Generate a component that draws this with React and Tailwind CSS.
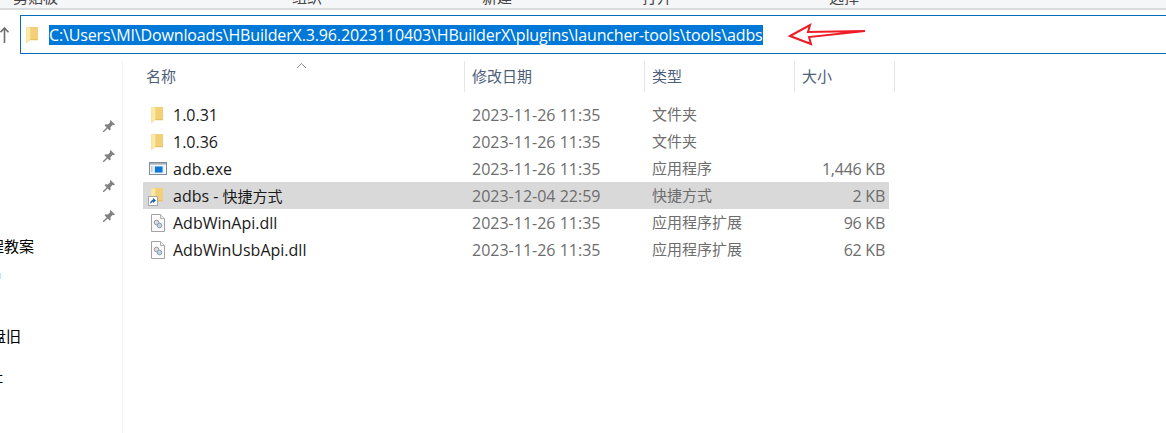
const files = [
  { id: "a", name: "1.0.31", date: "2023-11-26 11:35", type: "文件夹", size: "", icon: "folder" },
  { id: "b", name: "1.0.36", date: "2023-11-26 11:35", type: "文件夹", size: "", icon: "folder" },
  { id: "c", name: "adb.exe", date: "2023-11-26 11:35", type: "应用程序", size: "1,446 KB", icon: "exe" },
  { id: "d", name: "adbs - ", cjk: "快捷方式", date: "2023-12-04 22:59", type: "快捷方式", size: "2 KB", icon: "shortcut", selected: true },
  { id: "e", name: "AdbWinApi.dll", date: "2023-11-26 11:35", type: "应用程序扩展", size: "96 KB", icon: "dll" },
  { id: "f", name: "AdbWinUsbApi.dll", date: "2023-11-26 11:35", type: "应用程序扩展", size: "62 KB", icon: "dll" },
];

function Folder() {
  return (
    <svg width="12" height="17" viewBox="0 0 12 17" className="block">
      <path d="M3.5 1H12v13H3.5z" fill="#f3d077" />
      <path d="M0 1.5 4.5 1v12.5L1 16.5l-1 .3z" fill="#fbe9a6" stroke="#ecd48a" strokeWidth="0.5" />
      <path d="M4.5 13.4H12v.8H4.5z" fill="#e3b84f" />
    </svg>
  );
}

function Exe() {
  return (
    <svg width="18" height="13" viewBox="0 0 18 13" className="block">
      <rect x="0.5" y="0.5" width="17" height="12" fill="#f4f6f8" stroke="#7f8c9a" />
      <rect x="1" y="1" width="16" height="1.6" fill="#a3afbc" />
      <rect x="4.5" y="4" width="10" height="7" fill="#d6e6f5" />
      <rect x="6" y="4.5" width="7.5" height="6" fill="#0a78d7" />
      <path d="M2 5h1.5M2 7h1.5M2 9h1.5" stroke="#8a97a5" />
    </svg>
  );
}

function Dll() {
  return (
    <svg width="14" height="18" viewBox="0 0 14 18" className="block">
      <path d="M.5.5h9l4 4v13H.5z" fill="#fcfcfc" stroke="#a3a3a3" />
      <path d="M9.5.5v4h4" fill="#ececec" stroke="#b0b0b0" />
      <circle cx="5.5" cy="8.5" r="2.3" fill="#dcdcdc" stroke="#989898" />
      <circle cx="8.5" cy="11.5" r="2.3" fill="#c3d4e4" stroke="#7f9cb8" />
    </svg>
  );
}

function Shortcut() {
  return (
    <div className="relative w-[12px] h-[17px]">
      <Folder />
      <svg className="absolute left-[-3px] top-[9px]" width="10" height="10" viewBox="0 0 10 10">
        <rect x="0.5" y="0.5" width="9" height="9" fill="#fff" stroke="#a8a8a8" />
        <path d="M2.5 8V5.6L5 3.6V2l3 2.6L5 7V5.6L3.8 6.6z" fill="#1c5fb0" />
      </svg>
    </div>
  );
}

const icons = {
  folder: { C: Folder, pad: "pl-[8px]" },
  exe: { C: Exe, pad: "pl-[6px]" },
  dll: { C: Dll, pad: "pl-[8px]" },
  shortcut: { C: Shortcut, pad: "pl-[8px]" },
};

function Pin() {
  return (
    <svg width="14" height="14" viewBox="0 0 14 14" className="block">
      <path d="M8.5 1 13 5.5l-1.3.7-.9-.4-2.4 2.4.3 2.3-1 1L5.6 9.4 2 13l-1 0 0-1 3.6-3.6L2.5 6.3l1-1 2.3.3 2.4-2.4-.4-.9z" fill="#828282" />
    </svg>
  );
}

function Header({ width, children }) {
  return (
    <div className={`${width} h-[31px] border-r border-[#e5e5e5] flex items-center text-[#4c607a]`}>
      {children}
    </div>
  );
}

export default function App() {
  return (
    <div
      className="relative w-[1166px] h-[433px] overflow-hidden bg-white text-[16px] flex flex-col"
      style={{ fontFamily: '"Open Sans", "Noto Sans CJK SC", sans-serif' }}
    >
      <div className="h-[10px] shrink-0 bg-[#f5f6f7] border-b-2 border-[#dadbdc] flex text-[#444] text-[15px] overflow-hidden leading-[20px]">
        <div className="w-[185px] h-[8px] border-r border-[#e1e3e6] pl-[13px] -mt-[13px] box-content"><span>剪贴板</span></div>
        <div className="w-[382px] h-[8px] border-r border-[#e1e3e6] -mt-[13px] box-content flex">
          <span className="ml-[93px]">组织</span>
          <span className="ml-[160px]">新建</span>
        </div>
        <div className="w-[152px] h-[8px] border-r border-[#e1e3e6] -mt-[13px] box-content pl-[60px]"><span>打开</span></div>
        <div className="w-[102px] h-[8px] border-r border-[#e1e3e6] -mt-[13px] box-content pl-[34px]"><span>选择</span></div>
      </div>

      <div className="h-[39px] mt-[5px] shrink-0 flex">
        <div className="w-[20px] flex items-center">
          <svg width="10" height="16" viewBox="0 0 10 16" className="mt-[1px]">
            <path d="M4.5 1v15M.5 5.2 4.5 1l4 4.2" fill="none" stroke="#6d6d6d" strokeWidth="1.6" />
          </svg>
        </div>
        <div className="flex-1 border-[1.5px] border-r-0 border-[#0a6cbd] flex items-center pl-[5px]">
          <Folder />
          <span className="ml-[11px] h-[20px] leading-[20px] bg-[#0078d7] text-white whitespace-nowrap tracking-[-0.14px]">
            C:\Users\MI\Downloads\HBuilderX.3.96.2023110403\HBuilderX\plugins\launcher-tools\tools\adbs
          </span>
        </div>
      </div>

      <div className="flex-1 flex mt-[7px]">
        <aside className="w-[123px] shrink-0 border-r border-[#f3f3f3] pt-[50px] text-black text-[15px] overflow-hidden">
          {[0, 1, 2, 3].map((i) => (
            <div key={i} className="h-[30px] flex items-center justify-end pr-[6px]"><Pin /></div>
          ))}
          <div className="h-[30px] flex items-center -ml-[11px] whitespace-nowrap">程教案</div>
          <div className="h-[30px] flex items-center"><div className="w-[1px] h-[6px] bg-[#a8f4f4]" /></div>
          <div className="h-[30px]" />
          <div className="h-[30px] flex items-center -ml-[9px] whitespace-nowrap">盘旧</div>
          <div className="h-[10px]" />
          <div className="h-[30px] flex items-center -ml-[12px] whitespace-nowrap">址</div>
        </aside>

        <main className="flex-1 min-w-0">
          <div className="relative flex text-[15px]">
            <Header width="w-[342px] pl-[23px]">名称</Header>
            <Header width="w-[180px] pl-[7px]">修改日期</Header>
            <Header width="w-[150px] pl-[7px]">类型</Header>
            <Header width="w-[100px] pl-[7px]">大小</Header>
            <svg className="absolute left-[173px] top-[1px]" width="11" height="7" viewBox="0 0 11 7">
              <path d="M1 6 5.5 1.5 10 6" fill="none" stroke="#8a8a8a" />
            </svg>
          </div>

          <div className="ml-[20px] mt-[9px] w-[746px]">
            {files.map((f) => {
              const { C, pad } = icons[f.icon];
              return (
                <div key={f.id} className={`h-[27px] flex items-center ${f.selected ? "bg-[#d9d9d9]" : ""}`}>
                  <div className={`w-[30px] ${pad}`}><C /></div>
                  <div className="w-[299px] text-[#1a1a1a] whitespace-pre">
                    {f.name}
                    {f.cjk && <span className="text-[15px]">{f.cjk}</span>}
                  </div>
                  <div className="w-[180px] text-[#6d6d6d] whitespace-nowrap">{f.date}</div>
                  <div className="w-[150px] text-[#6d6d6d] text-[15px] whitespace-nowrap">{f.type}</div>
                  <div className="w-[83px] text-right text-[#6d6d6d] whitespace-nowrap tracking-[-0.25px]">{f.size}</div>
                </div>
              );
            })}
          </div>
        </main>
      </div>

      <svg className="absolute left-[786px] top-[22px]" width="82" height="26" viewBox="0 0 82 26">
        <path d="M4 14 24 3l-2 7 57-1-56 6 2 7z" fill="#fff" stroke="#ee1c25" strokeWidth="2" />
      </svg>
    </div>
  );
}
